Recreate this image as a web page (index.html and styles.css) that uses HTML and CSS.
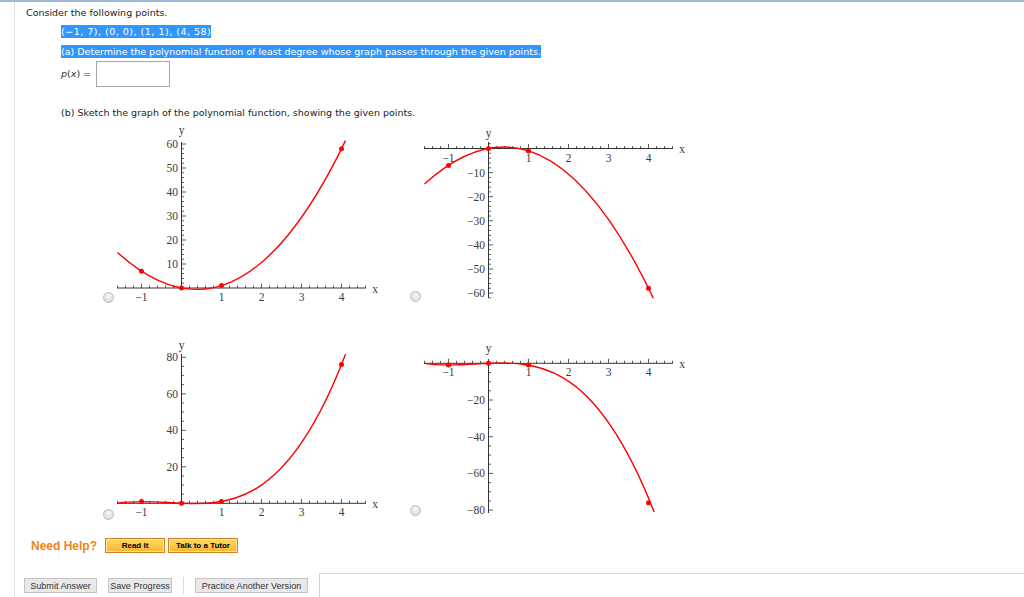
FILE: index.html
```html
<!DOCTYPE html>
<html>
<head>
<meta charset="utf-8">
<link rel="stylesheet" href="styles.css">
</head>
<body>
<div class="topbar"></div>
<div class="page">
  <p class="intro">Consider the following points.</p>
  <div class="indent">
    <div class="points"><span class="sel">(−1, 7), (0, 0), (1, 1), (4, 58)</span></div>
    <div class="question"><span class="sel">(a) Determine the polynomial function of least degree whose graph passes through the given points.</span></div>
    <div class="answer"><span class="px"><i>p</i>(<i>x</i>) =</span><span class="answer-box"></span></div>
    <div class="partb">(b) Sketch the graph of the polynomial function, showing the given points.</div>
  </div>

  <svg class="defs" width="0" height="0">
    <defs>
      <g id="xaxis" font-family="Liberation Serif, serif" font-size="11.5" fill="#3a3a3a">
        <path d="M3 0H252" stroke="#333" stroke-width="1" fill="none"/>
        <path d="M3.5 0v-2.5M11.5 0v-2.5M19.5 0v-2.5M35.5 0v-2.5M43.5 0v-2.5M51.5 0v-2.5M59.5 0v-2.5M75.5 0v-2.5M83.5 0v-2.5M91.5 0v-2.5M99.5 0v-2.5M115.5 0v-2.5M123.5 0v-2.5M131.5 0v-2.5M139.5 0v-2.5M155.5 0v-2.5M163.5 0v-2.5M171.5 0v-2.5M179.5 0v-2.5M195.5 0v-2.5M203.5 0v-2.5M211.5 0v-2.5M219.5 0v-2.5M235.5 0v-2.5M243.5 0v-2.5M251.5 0v-2.5M27.5 0v-4.5M107.5 0v-4.5M147.5 0v-4.5M187.5 0v-4.5M227.5 0v-4.5" stroke="#333" stroke-width="0.8" fill="none"/>
        <text x="27.5" y="9" text-anchor="middle" dominant-baseline="central">−1</text>
        <text x="107.5" y="9" text-anchor="middle" dominant-baseline="central">1</text>
        <text x="147.5" y="9" text-anchor="middle" dominant-baseline="central">2</text>
        <text x="187.5" y="9" text-anchor="middle" dominant-baseline="central">3</text>
        <text x="227.5" y="9" text-anchor="middle" dominant-baseline="central">4</text>
        <text x="261" y="0.5" text-anchor="middle" dominant-baseline="central">x</text>
      </g>
    </defs>
  </svg>

  <div class="graphs">
    <div class="choice">
      <span class="radio"></span>
      <svg class="plot" width="270" height="181" viewBox="0 0 270 181">
        <g class="ylab">
          <text x="67.5" y="8" text-anchor="middle">y</text>
          <text x="64" y="142" text-anchor="end">10</text>
          <text x="64" y="118" text-anchor="end">20</text>
          <text x="64" y="94" text-anchor="end">30</text>
          <text x="64" y="70" text-anchor="end">40</text>
          <text x="64" y="46" text-anchor="end">50</text>
          <text x="64" y="22" text-anchor="end">60</text>
        </g>
        <path class="axis" d="M67.5 20V168"/>
        <path class="tick" d="M67.5 161.2h2.5M67.5 156.4h2.5M67.5 151.6h2.5M67.5 146.8h2.5M67.5 137.2h2.5M67.5 132.4h2.5M67.5 127.6h2.5M67.5 122.8h2.5M67.5 113.2h2.5M67.5 108.4h2.5M67.5 103.6h2.5M67.5 98.8h2.5M67.5 89.2h2.5M67.5 84.4h2.5M67.5 79.6h2.5M67.5 74.8h2.5M67.5 65.2h2.5M67.5 60.4h2.5M67.5 55.6h2.5M67.5 50.8h2.5M67.5 41.2h2.5M67.5 36.4h2.5M67.5 31.6h2.5M67.5 26.8h2.5M67.5 142h4.5M67.5 118h4.5M67.5 94h4.5M67.5 70h4.5M67.5 46h4.5M67.5 22h4.5"/>
        <use href="#xaxis" y="166"/>
        <path class="curve" d="M3.5 130.5C79.5 199.5 155.5 177 231.5 18.6"/>
        <circle class="pt" cx="27.5" cy="149.2" r="2.5"/>
        <circle class="pt" cx="67.5" cy="166" r="2.5"/>
        <circle class="pt" cx="107.5" cy="163.6" r="2.5"/>
        <circle class="pt" cx="227.5" cy="26.8" r="2.5"/>
      </svg>
    </div>

    <div class="choice">
      <span class="radio"></span>
      <svg class="plot" width="270" height="180" viewBox="0 0 270 180">
        <g class="ylab">
          <text x="67.5" y="11" text-anchor="middle">y</text>
          <text x="64" y="50.6" text-anchor="end">−10</text>
          <text x="64" y="74.7" text-anchor="end">−20</text>
          <text x="64" y="98.8" text-anchor="end">−30</text>
          <text x="64" y="122.9" text-anchor="end">−40</text>
          <text x="64" y="147" text-anchor="end">−50</text>
          <text x="64" y="171.1" text-anchor="end">−60</text>
        </g>
        <path class="axis" d="M67.5 20V176"/>
        <path class="tick" d="M67.5 21.7h2.5M67.5 31.3h2.5M67.5 36.1h2.5M67.5 41h2.5M67.5 45.8h2.5M67.5 55.4h2.5M67.5 60.2h2.5M67.5 65.1h2.5M67.5 69.9h2.5M67.5 79.5h2.5M67.5 84.3h2.5M67.5 89.2h2.5M67.5 94h2.5M67.5 103.6h2.5M67.5 108.4h2.5M67.5 113.3h2.5M67.5 118.1h2.5M67.5 127.7h2.5M67.5 132.5h2.5M67.5 137.4h2.5M67.5 142.2h2.5M67.5 151.8h2.5M67.5 156.6h2.5M67.5 161.5h2.5M67.5 166.3h2.5M67.5 175.9h2.5M67.5 50.6h4.5M67.5 74.7h4.5M67.5 98.8h4.5M67.5 122.9h4.5M67.5 147h4.5M67.5 171.1h4.5"/>
        <use href="#xaxis" y="26.5"/>
        <path class="curve" d="M3.5 62.1C79.8 -7.4 156 15.6 232.3 176.2"/>
        <circle class="pt" cx="27.5" cy="43.4" r="2.5"/>
        <circle class="pt" cx="67.5" cy="26.5" r="2.5"/>
        <circle class="pt" cx="107.5" cy="28.9" r="2.5"/>
        <circle class="pt" cx="227.5" cy="166.3" r="2.5"/>
      </svg>
    </div>

    <div class="choice">
      <span class="radio"></span>
      <svg class="plot" width="270" height="183" viewBox="0 0 270 183">
        <g class="ylab">
          <text x="67.5" y="8" text-anchor="middle">y</text>
          <text x="64" y="129.8" text-anchor="end">20</text>
          <text x="64" y="93.3" text-anchor="end">40</text>
          <text x="64" y="56.8" text-anchor="end">60</text>
          <text x="64" y="20.3" text-anchor="end">80</text>
        </g>
        <path class="axis" d="M67.5 17V168"/>
        <path class="tick" d="M67.5 157.2h2.5M67.5 148h2.5M67.5 138.9h2.5M67.5 120.7h2.5M67.5 111.6h2.5M67.5 102.4h2.5M67.5 84.2h2.5M67.5 75h2.5M67.5 65.9h2.5M67.5 47.7h2.5M67.5 38.6h2.5M67.5 29.4h2.5M67.5 129.8h4.5M67.5 93.3h4.5M67.5 56.8h4.5M67.5 20.3h4.5"/>
        <use href="#xaxis" y="166.3"/>
        <path class="curve" d="M3.5 166.2C79.5 154.1 155.5 217.2 231.5 17.3"/>
        <circle class="pt" cx="27.5" cy="164.5" r="2.5"/>
        <circle class="pt" cx="67.5" cy="166.3" r="2.5"/>
        <circle class="pt" cx="107.5" cy="164.5" r="2.5"/>
        <circle class="pt" cx="227.5" cy="27.6" r="2.5"/>
      </svg>
    </div>

    <div class="choice">
      <span class="radio"></span>
      <svg class="plot" width="270" height="179" viewBox="0 0 270 179">
        <g class="ylab">
          <text x="67.5" y="11" text-anchor="middle">y</text>
          <text x="64" y="63" text-anchor="end">−20</text>
          <text x="64" y="99.7" text-anchor="end">−40</text>
          <text x="64" y="136.4" text-anchor="end">−60</text>
          <text x="64" y="173.1" text-anchor="end">−80</text>
        </g>
        <path class="axis" d="M67.5 22V176"/>
        <path class="tick" d="M67.5 35.5h2.5M67.5 44.7h2.5M67.5 53.8h2.5M67.5 72.2h2.5M67.5 81.4h2.5M67.5 90.5h2.5M67.5 108.9h2.5M67.5 118.1h2.5M67.5 127.2h2.5M67.5 145.6h2.5M67.5 154.8h2.5M67.5 163.9h2.5M67.5 63h4.5M67.5 99.7h4.5M67.5 136.4h4.5M67.5 173.1h4.5"/>
        <use href="#xaxis" y="26.3"/>
        <path class="curve" d="M3.5 26.4C79.4 38.5 155.2 -24.6 233.1 175"/>
        <circle class="pt" cx="27.5" cy="28.1" r="2.5"/>
        <circle class="pt" cx="67.5" cy="26.3" r="2.5"/>
        <circle class="pt" cx="107.5" cy="28.1" r="2.5"/>
        <circle class="pt" cx="227.5" cy="165.8" r="2.5"/>
      </svg>
    </div>
  </div>

  <div class="help">
    <span class="help-label">Need Help?</span>
    <span class="hbtn read">Read It</span>
    <span class="hbtn tutor">Talk to a Tutor</span>
  </div>

  <div class="actions">
    <span class="abtn submit">Submit Answer</span>
    <span class="abtn save">Save Progress</span>
    <span class="divider"></span>
    <span class="abtn practice">Practice Another Version</span>
    <div class="panel"></div>
  </div>
</div>
</body>
</html>
```

FILE: styles.css
```css
* { box-sizing: border-box; }
html, body { margin: 0; padding: 0; background: #fff; }
body {
  width: 1024px;
  height: 597px;
  overflow: hidden;
  font-family: "DejaVu Sans", Verdana, sans-serif;
  font-size: 9.5px;
  color: #222;
}
.topbar { height: 2px; background: #9db8d6; }
.page {
  margin-left: 14px;
  border-left: 1px solid #e2e2e2;
  height: 595px;
  padding-left: 11px;
  padding-top: 5px;
}
.intro { margin: 0; line-height: 12px; }
.indent { margin-left: 35px; }
.points { margin-top: 7px; line-height: 12px; }
.sel { background: #3297fd; color: #fff; padding: 1px 0; }
.points .sel { letter-spacing: 0.5px; }
.question { margin-top: 7px; line-height: 13px; }
.answer { display: flex; align-items: center; gap: 5px; margin-top: 2px; height: 27px; }
.px { color: #333; }
.answer-box { width: 74px; height: 26px; border: 1px solid #a6a6a6; background: #fff; }
.partb { margin-top: 20px; line-height: 12px; }
.defs { display: block; }
.graphs {
  display: grid;
  grid-template-columns: 307px 307px;
  row-gap: 34px;
  align-items: start;
  margin-left: 78px;
  margin-top: 3px;
}
.choice { display: flex; align-items: flex-end; }
.radio {
  width: 11px;
  height: 11px;
  flex: none;
  margin-left: -1px;
  border-radius: 50%;
  border: 1px solid #bcbcbc;
  background: radial-gradient(circle at 50% 35%, #f6f6f6, #d6d6d6);
}
.plot { display: block; flex: none; }
.ylab { font-family: "Liberation Serif", serif; font-size: 11.5px; fill: #3a3a3a; dominant-baseline: central; }
.axis { stroke: #333; stroke-width: 1; fill: none; }
.tick { stroke: #333; stroke-width: 0.8; fill: none; }
.curve { stroke: #f00; stroke-width: 1.4; fill: none; }
.pt { fill: #f00; }

.help { display: flex; align-items: center; height: 15px; margin-top: 18px; margin-left: 5px; }
.help-label {
  font-family: "Liberation Sans", Arial, sans-serif;
  font-weight: bold;
  font-size: 12px;
  color: #ee8420;
  margin-right: 8px;
}
.hbtn {
  display: flex;
  align-items: center;
  justify-content: center;
  height: 15px;
  font-family: "Liberation Sans", Arial, sans-serif;
  font-weight: bold;
  font-size: 8px;
  color: #000;
  border: 1px solid #d57f22;
  background: linear-gradient(#ffd866, #fbb531);
  box-shadow: inset 0 0 0 1px #ffe3a0;
}
.read { width: 60px; }
.tutor { width: 70px; margin-left: 3px; }

.actions { display: flex; align-items: flex-start; margin-top: 20px; margin-left: -2px; }
.abtn {
  display: flex;
  align-items: center;
  justify-content: center;
  margin-top: 5px;
  height: 15px;
  border: 1px solid #c4c4c4;
  background: #e9e9e9;
  font-family: "Liberation Sans", Arial, sans-serif;
  font-size: 9.1px;
  color: #333;
  white-space: nowrap;
}
.submit { width: 73px; }
.save { width: 64px; margin-left: 11px; }
.divider { width: 1px; height: 17px; background: #dcdcdc; margin: 4px 11px 0 11px; }
.practice { width: 113px; }
.panel {
  flex: 1;
  height: 30px;
  margin-left: 11px;
  border-top: 1px solid #d6d6d6;
  border-left: 1px solid #d6d6d6;
}
```
